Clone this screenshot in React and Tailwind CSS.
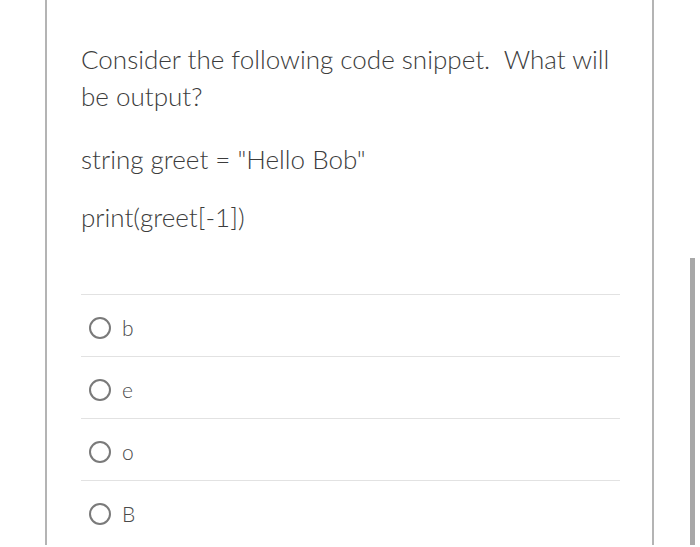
import React from 'react';

const options = ['b', 'e', 'o', 'B'];

export default function App() {
  return (
    <div className="relative h-[547px] w-[700px] overflow-hidden bg-white" style={{ fontFamily: 'Lato, "Open Sans", sans-serif' }}>
      <div className="ml-[45px] h-[545px] w-[609px] border-x-2 border-[#b4b4b4] pl-[34px] pr-[32px] pt-[41px] font-light text-[#3c3c3c]">
        <p className="text-[26px] leading-[37px]">
          Consider the following code snippet.&nbsp; What will be output?
        </p>
        <p className="mt-[26px] text-[26px] leading-[37px]">string greet = "Hello Bob"</p>
        <p className="mt-[21px] text-[26px] leading-[37px]">print(greet[-1])</p>

        <div className="mt-[58px]">
          {options.map(o => (
            <div key={o} className="flex h-[62px] items-center gap-[11px] border-t border-[#e2e2e2] pl-[8px] pt-[4px]">
              <span className="h-[22px] w-[22px] rounded-full border-2 border-[#7a7a7a]" />
              <span className="text-[21px] leading-none text-[#4a4a4a]">{o}</span>
            </div>
          ))}
        </div>
      </div>
      <div className="absolute left-[690px] top-[258px] h-[287px] w-[5px] bg-[#a8a8a8]" />
    </div>
  );
}
